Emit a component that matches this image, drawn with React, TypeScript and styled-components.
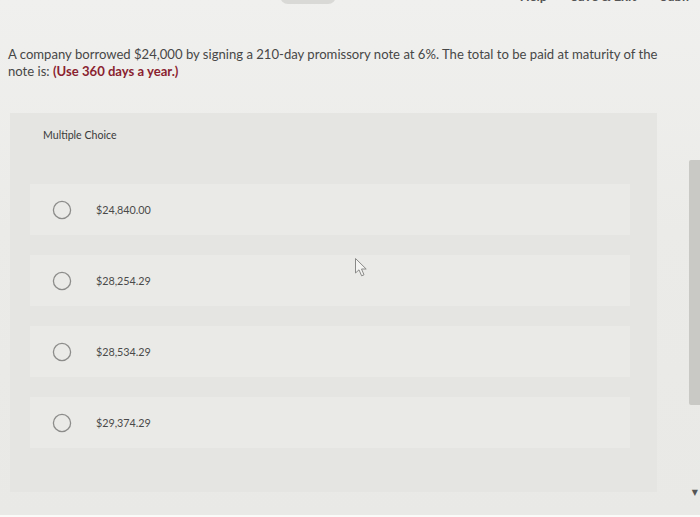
import React from 'react'
import styled, { createGlobalStyle } from 'styled-components'

const GlobalStyle = createGlobalStyle`
  html, body {
    margin: 0;
    padding: 0;
    height: 100%;
    overflow: hidden;
  }
  body {
    background: #ebebe8;
    font-family: Lato, "Open Sans", "Liberation Sans", sans-serif;
    color: #3a3a3a;
  }
`;

const choices = ['$24,840.00', '$28,254.29', '$28,534.29', '$29,374.29'];

function Radio() {
  return (
    <svg width="20" height="20" viewBox="0 0 20 20">
      <circle cx="10" cy="10" r="8.6" fill="none" stroke="#8c8c8a" strokeWidth="1.3" />
    </svg>
  );
}

function Cursor() {
  return (
    <svg width="16" height="21" viewBox="0 0 16 21">
      <path
        d="M1.5 1.5 L1.5 16 L5 12.8 L7.6 18.8 L10 17.8 L7.5 12 L12.2 12 Z"
        fill="#f4f4f2"
        stroke="#8a8a88"
        strokeWidth="1"
        strokeLinejoin="round"
      />
    </svg>
  );
}

function App() {
  return (
    <>
      <GlobalStyle />
      <Page>
        <Main>
          <TopBar>
            <PillButton />
            <Spacer />
            <NavLink>Help</NavLink>
            <NavLink>Save &amp; Exit</NavLink>
            <NavLink $last>Submit</NavLink>
          </TopBar>
          <Question>
            A company borrowed $24,000 by signing a 210-day promissory note at 6%. The total to be paid at maturity of the
            note is: <Hint>(Use 360 days a year.)</Hint>
          </Question>
          <Card>
            <CardHeader>Multiple Choice</CardHeader>
            <Choices>
              {choices.map((c) => (
                <Choice key={c}>
                  <Radio />
                  <ChoiceText>{c}</ChoiceText>
                </Choice>
              ))}
            </Choices>
          </Card>
          <Pointer>
            <Cursor />
          </Pointer>
        </Main>
        <ScrollTrack>
          <ScrollThumb />
          <ScrollArrow>▼</ScrollArrow>
        </ScrollTrack>
      </Page>
    </>
  )
}

const Page = styled.div`
  display: flex;
  width: 700px;
  height: 517px;
  background: linear-gradient(180deg, #f0f0ee 0%, #ebebe8 45%, #e9e9e6 100%);
  border-bottom: 2px solid #fafaf8;
  box-sizing: border-box;
`;

const Main = styled.div`
  position: relative;
  flex: 1;
  display: flex;
  flex-direction: column;
`;

const TopBar = styled.div`
  height: 5px;
  overflow: hidden;
  display: flex;
  align-items: flex-end;
  padding-left: 280px;
`;

const PillButton = styled.div`
  width: 56px;
  height: 16px;
  border-radius: 8px;
  background: #d9d9d6;
  margin-bottom: 1px;
`;

const Spacer = styled.div`
  flex: 1;
`;

const NavLink = styled.span<{ $last?: boolean }>`
  font-size: 13px;
  line-height: 13px;
  font-weight: 700;
  color: #555;
  margin-bottom: 2px;
  margin-right: ${({ $last }) => ($last ? '-12px' : '24px')};
`;

const Question = styled.div`
  margin: 41px 0 0;
  padding: 0 30px 0 8px;
  font-size: 13.1px;
  line-height: 17px;
  color: #474747;
`;

const Hint = styled.strong`
  color: #8a1f30;
  font-weight: 700;
`;

const Card = styled.div`
  margin: 33px 0 0 10px;
  width: 647px;
  background: #e5e5e2;
  padding-bottom: 44px;
`;

const CardHeader = styled.div`
  padding: 16px 0 0 33px;
  height: 52px;
  box-sizing: border-box;
  font-size: 10.6px;
  color: #3a3a3a;
`;

const Choices = styled.div`
  display: flex;
  flex-direction: column;
  gap: 20px;
  padding: 19px 0 0 20px;
`;

const Choice = styled.div`
  display: flex;
  align-items: center;
  gap: 24px;
  width: 600px;
  height: 51px;
  padding-left: 22px;
  box-sizing: border-box;
  background: #eaeae7;
`;

const ChoiceText = styled.span`
  font-size: 10.8px;
  color: #4a4a4a;
  letter-spacing: -0.05px;
`;

const Pointer = styled.div`
  position: absolute;
  left: 354px;
  top: 257px;
`;

const ScrollTrack = styled.div`
  position: relative;
  width: 11px;
  display: flex;
  flex-direction: column;
  align-items: flex-end;
  padding-top: 160px;
  box-sizing: border-box;
`;

const ScrollThumb = styled.div`
  width: 11px;
  height: 245px;
  background: #c9c9c5;
  border-radius: 2px 0 0 2px;
`;

const ScrollArrow = styled.span`
  position: absolute;
  right: 2px;
  top: 488px;
  font-size: 8px;
  color: #555;
  font-family: "DejaVu Sans", sans-serif;
`;

export default App
